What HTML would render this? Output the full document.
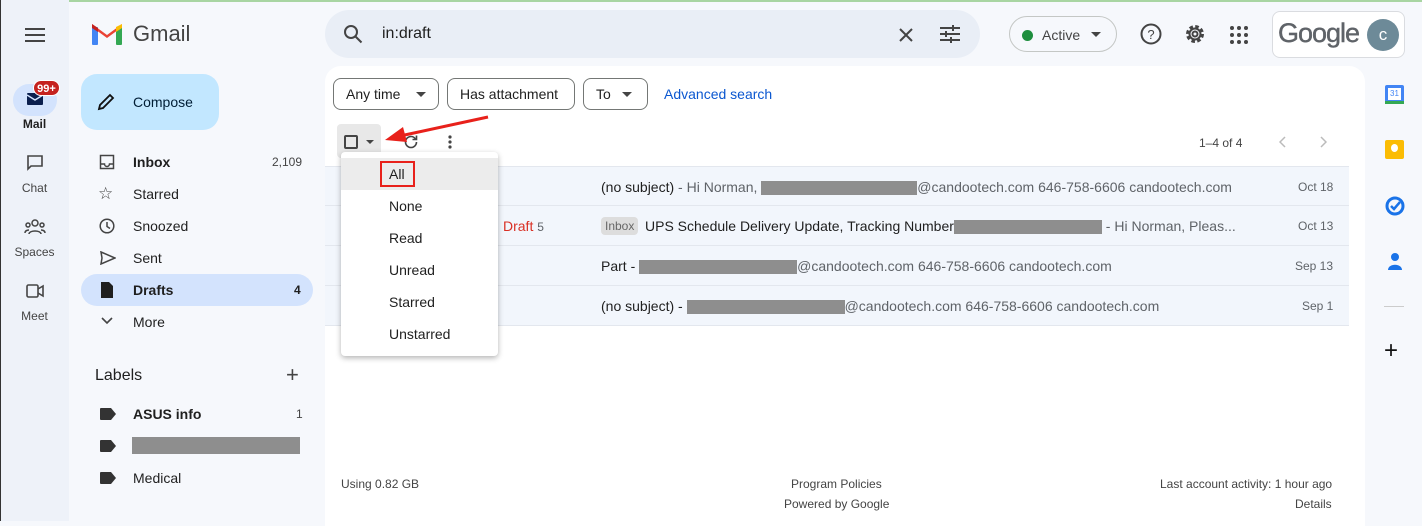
<!DOCTYPE html>
<html><head><meta charset="utf-8"><style>
*{box-sizing:border-box;margin:0;padding:0}
body{width:1422px;height:521px;overflow:hidden;background:#f6f8fc;font-family:"Liberation Sans",Arial,sans-serif;position:relative;color:#1f1f1f}
.a{position:absolute}
.rail{left:0;top:0;width:69px;height:521px;background:#eef2f9;border-left:1px solid #333}
.topline{left:0;top:0;width:1422px;height:2px;background:#a8d5a2}
.nav{font-size:14px;color:#1f1f1f}
.navi{left:81px;width:232px;height:32px;border-radius:16px}
.lab{left:133px}
.row{left:325px;width:1024px;height:40px;background:#f2f6fc;border-bottom:1px solid #e3e7ee;font-size:14px;color:#1f1f1f}
.row span{position:absolute;top:12px}
.g{color:#5f6368}
.red{background:#8e8e8e;height:14px;display:inline-block;vertical-align:middle}
.chip{top:78px;height:32px;border:1px solid #747775;border-radius:8px;font-size:14px;padding:7px 12px;color:#1f1f1f}
.mi{left:389px;font-size:14px;color:#1f1f1f}
.ft{font-size:12px;color:#444}
</style></head><body>
<div class="a topline"></div>
<div class="a rail"></div>
<div class="a" style="left:25px;top:28px;width:20px;height:2px;background:#444;box-shadow:0 6px 0 #444,0 12px 0 #444"></div>
<div class="a" style="left:13px;top:84px;width:44px;height:32px;border-radius:16px;background:#d3e3fd"></div>
<svg class="a" style="left:26px;top:91px" width="18" height="16" viewBox="0 0 18 16"><rect x="1" y="2" width="16" height="12" rx="1" fill="#0b1f4e"/><path d="M1 4l8 5 8-5" stroke="#d3e3fd" stroke-width="1.5" fill="none"/></svg>
<div class="a" style="left:33px;top:80px;width:27px;height:16px;border-radius:8px;background:#c5221f;color:#fff;font-size:11px;font-weight:bold;text-align:center;line-height:16px;border:1px solid #fff">99+</div>
<div class="a" style="left:0;width:69px;text-align:center;top:117px;font-size:12px;font-weight:bold">Mail</div>
<svg class="a" style="left:26px;top:154px" width="18" height="18" viewBox="0 0 18 18"><path d="M2 2h14v10H5l-3 3z" fill="none" stroke="#444" stroke-width="1.6"/></svg>
<div class="a" style="left:0;width:69px;text-align:center;top:181px;font-size:12px;color:#444">Chat</div>
<svg class="a" style="left:24px;top:218px" width="22" height="18" viewBox="0 0 22 18"><circle cx="11" cy="5" r="3" fill="none" stroke="#444" stroke-width="1.5"/><circle cx="4" cy="7" r="2" fill="none" stroke="#444" stroke-width="1.5"/><circle cx="18" cy="7" r="2" fill="none" stroke="#444" stroke-width="1.5"/><path d="M5 16c0-4 12-4 12 0M1 15c0-3 4-3 4-3M21 15c0-3-4-3-4-3" fill="none" stroke="#444" stroke-width="1.5"/></svg>
<div class="a" style="left:0;width:69px;text-align:center;top:245px;font-size:12px;color:#444">Spaces</div>
<svg class="a" style="left:26px;top:284px" width="18" height="14" viewBox="0 0 18 14"><rect x="1" y="1" width="11" height="12" rx="1.5" fill="none" stroke="#444" stroke-width="1.6"/><path d="M12 5l5-3v10l-5-3" fill="none" stroke="#444" stroke-width="1.6"/></svg>
<div class="a" style="left:0;width:69px;text-align:center;top:309px;font-size:12px;color:#444">Meet</div>

<svg class="a" style="left:92px;top:23px" width="30" height="22" viewBox="0 0 30 22"><rect x="0" y="4" width="6" height="18" rx="1" fill="#4285f4"/><rect x="24" y="4" width="6" height="18" rx="1" fill="#34a853"/><path d="M0 4l15 11L30 4V1L15 12 0 1z" fill="#ea4335"/><path d="M24 4l6-3v4l-6 4z" fill="#fbbc04"/><path d="M0 1l6 4v4L0 5z" fill="#c5221f"/></svg>
<div class="a" style="left:133px;top:21px;font-size:22px;color:#444">Gmail</div>

<div class="a" style="left:81px;top:74px;width:138px;height:56px;border-radius:16px;background:#c2e7ff"></div>
<svg class="a" style="left:96px;top:92px" width="20" height="20" viewBox="0 0 20 20"><path d="M3 17l1-4L14 3l3 3L7 16z" fill="none" stroke="#111" stroke-width="1.8"/></svg>
<div class="a" style="left:133px;top:94px;font-size:14px;color:#001d35">Compose</div>

<div class="a navi" style="top:274px;background:#d3e3fd"></div>
<svg class="a" style="left:99px;top:154px" width="16" height="16" viewBox="0 0 16 16"><path d="M1.5 1.5h13v13h-13zM1.5 10h4a2.5 2.5 0 005 0h4" fill="none" stroke="#444" stroke-width="1.5"/></svg>
<div class="a nav lab" style="top:154px;font-weight:bold">Inbox</div><div class="a" style="left:272px;top:155px;font-size:12px;color:#444">2,109</div>
<div class="a" style="left:98px;top:184px;font-size:17px;color:#444">☆</div><div class="a nav lab" style="top:186px">Starred</div>
<svg class="a" style="left:99px;top:218px" width="16" height="16" viewBox="0 0 16 16"><circle cx="8" cy="8" r="6.8" fill="none" stroke="#444" stroke-width="1.5"/><path d="M8 4v4.5l3 2" fill="none" stroke="#444" stroke-width="1.5"/></svg><div class="a nav lab" style="top:218px">Snoozed</div>
<svg class="a" style="left:100px;top:251px" width="16" height="14" viewBox="0 0 16 14"><path d="M1 1l14 6-14 6 1-6z" fill="none" stroke="#444" stroke-width="1.5"/></svg><div class="a nav lab" style="top:250px">Sent</div>
<svg class="a" style="left:101px;top:282px" width="12" height="16" viewBox="0 0 12 16"><path d="M0 0h8l4 4v12H0z" fill="#1f1f1f"/></svg><div class="a nav lab" style="top:282px;font-weight:bold">Drafts</div><div class="a" style="left:294px;top:283px;font-size:12px;font-weight:bold">4</div>
<svg class="a" style="left:101px;top:317px" width="12" height="8" viewBox="0 0 12 8"><path d="M1 1l5 5 5-5" fill="none" stroke="#444" stroke-width="1.6"/></svg><div class="a nav lab" style="top:314px">More</div>
<div class="a" style="left:95px;top:367px;font-size:16px">Labels</div>
<div class="a" style="left:286px;top:362px;font-size:22px;color:#444">+</div>
<svg class="a" style="left:100px;top:408px" width="16" height="12" viewBox="0 0 16 12"><path d="M0 1a1 1 0 011-1h10l5 6-5 6H1a1 1 0 01-1-1z" fill="#333"/></svg><div class="a nav lab" style="top:406px;font-weight:bold">ASUS info</div><div class="a" style="left:296px;top:407px;font-size:12px;color:#444">1</div>
<svg class="a" style="left:100px;top:440px" width="16" height="12" viewBox="0 0 16 12"><path d="M0 1a1 1 0 011-1h10l5 6-5 6H1a1 1 0 01-1-1z" fill="#333"/></svg><div class="a" style="left:132px;top:437px;width:168px;height:17px;background:#8e8e8e"></div>
<svg class="a" style="left:100px;top:472px" width="16" height="12" viewBox="0 0 16 12"><path d="M0 1a1 1 0 011-1h10l5 6-5 6H1a1 1 0 01-1-1z" fill="#333"/></svg><div class="a nav lab" style="top:470px">Medical</div>

<div class="a" style="left:325px;top:10px;width:655px;height:48px;border-radius:24px;background:#e9eef6"></div>
<svg class="a" style="left:343px;top:24px" width="20" height="20" viewBox="0 0 20 20"><circle cx="8" cy="8" r="6" fill="none" stroke="#444" stroke-width="2"/><path d="M12.5 12.5l6 6" stroke="#444" stroke-width="2"/></svg>
<div class="a" style="left:382px;top:25px;font-size:16px">in:draft</div>
<svg class="a" style="left:898px;top:27px" width="16" height="16" viewBox="0 0 16 16"><path d="M2 2l12 12M14 2L2 14" stroke="#444" stroke-width="2"/></svg>
<svg class="a" style="left:940px;top:25px" width="20" height="18" viewBox="0 0 20 18"><path d="M0 3h20M0 9h20M0 15h20" stroke="#444" stroke-width="2"/><rect x="12" y="0" width="2" height="6" fill="#444"/><rect x="5" y="6" width="2" height="6" fill="#444"/><rect x="10" y="12" width="2" height="6" fill="#444"/></svg>

<div class="a" style="left:1009px;top:16px;width:108px;height:36px;border:1px solid #c4c7c5;border-radius:18px"></div>
<div class="a" style="left:1022px;top:30px;width:11px;height:11px;border-radius:50%;background:#1e8e3e"></div>
<div class="a" style="left:1042px;top:27px;font-size:14px;color:#444">Active</div>
<div class="a" style="left:1091px;top:32px;border:5px solid transparent;border-top-color:#444"></div>
<svg class="a" style="left:1140px;top:23px" width="22" height="22" viewBox="0 0 22 22"><circle cx="11" cy="11" r="9.5" fill="none" stroke="#444" stroke-width="2"/><text x="11" y="16" font-size="13" text-anchor="middle" fill="#444" font-family="Liberation Sans">?</text></svg>
<svg class="a" style="left:1184px;top:23px" width="22" height="22" viewBox="0 0 22 22"><circle cx="11" cy="11" r="7" fill="none" stroke="#444" stroke-width="4" stroke-dasharray="3.3 2.2"/><circle cx="11" cy="11" r="5.5" fill="none" stroke="#444" stroke-width="2"/><circle cx="11" cy="11" r="2.5" fill="none" stroke="#444" stroke-width="2"/></svg>
<svg class="a" style="left:1230px;top:26px" width="18" height="18" viewBox="0 0 18 18" fill="#444"><circle cx="2" cy="2" r="2"/><circle cx="9" cy="2" r="2"/><circle cx="16" cy="2" r="2"/><circle cx="2" cy="9" r="2"/><circle cx="9" cy="9" r="2"/><circle cx="16" cy="9" r="2"/><circle cx="2" cy="16" r="2"/><circle cx="9" cy="16" r="2"/><circle cx="16" cy="16" r="2"/></svg>
<div class="a" style="left:1272px;top:11px;width:133px;height:47px;border:1px solid #dadce0;border-radius:8px;background:#fff"></div>
<div class="a" style="left:1278px;top:18px;font-size:27px;color:#5f6368;letter-spacing:-1px;-webkit-text-stroke:0.4px #5f6368">Google</div>
<div class="a" style="left:1367px;top:19px;width:32px;height:32px;border-radius:50%;background:#6d8a98;color:#fff;font-size:17px;text-align:center;line-height:32px">c</div>

<div class="a" style="left:325px;top:66px;width:1040px;height:460px;background:#fff;border-radius:16px 16px 0 0"></div>
<div class="a chip" style="left:333px;width:106px">Any time</div><div class="a" style="left:416px;top:92px;border:5px solid transparent;border-top-color:#444"></div>
<div class="a chip" style="left:447px;width:128px">Has attachment</div>
<div class="a chip" style="left:583px;width:65px">To</div><div class="a" style="left:622px;top:92px;border:5px solid transparent;border-top-color:#444"></div>
<div class="a" style="left:664px;top:86px;font-size:14px;color:#0b57d0">Advanced search</div>

<div class="a" style="left:337px;top:124px;width:44px;height:34px;background:#e8e8e8;border-radius:4px"></div>
<div class="a" style="left:344px;top:135px;width:14px;height:14px;border:2px solid #444;border-radius:2px"></div>
<div class="a" style="left:366px;top:140px;border:4px solid transparent;border-top-color:#444"></div>
<svg class="a" style="left:403px;top:134px" width="16" height="16" viewBox="0 0 16 16"><path d="M13.5 8A5.5 5.5 0 118 2.5c2 0 3.5 1 4.5 2.5" fill="none" stroke="#444" stroke-width="1.6"/><path d="M13.5 1.5v4h-4" fill="none" stroke="#444" stroke-width="1.6"/></svg>
<svg class="a" style="left:448px;top:135px" width="4" height="14" viewBox="0 0 4 14" fill="#444"><circle cx="2" cy="2" r="1.6"/><circle cx="2" cy="7" r="1.6"/><circle cx="2" cy="12" r="1.6"/></svg>
<svg class="a" style="left:380px;top:112px" width="112" height="34" viewBox="0 0 112 34"><path d="M108 5L20 24" stroke="#e8211b" stroke-width="3"/><path d="M5 28l18-13 4 15z" fill="#e8211b"/></svg>
<div class="a" style="left:1199px;top:136px;font-size:12px;color:#444">1–4 of 4</div>
<svg class="a" style="left:1279px;top:136px" width="8" height="12" viewBox="0 0 8 12"><path d="M6 1L1 6l5 5" fill="none" stroke="#bbb" stroke-width="1.5"/></svg>
<svg class="a" style="left:1319px;top:136px" width="8" height="12" viewBox="0 0 8 12"><path d="M2 1l5 5-5 5" fill="none" stroke="#bbb" stroke-width="1.5"/></svg>

<div class="a row" style="top:166px;border-top:1px solid #e3e7ee"><span style="left:276px">(no subject) <span class="g" style="position:static">- Hi Norman, <i class="red" style="width:156px"></i>@candootech.com 646-758-6606 candootech.com</span></span><span class="g" style="left:973px;font-size:12px;top:13px">Oct 18</span></div>
<div class="a row" style="top:206px"><span style="left:178px;color:#d93025">Draft <span class="g" style="position:static;font-size:12px">5</span></span><span style="left:276px;top:11px;background:#ddd;color:#666;font-size:12px;padding:2px 4px;border-radius:4px">Inbox</span><span style="left:320px">UPS Schedule Delivery Update, Tracking Number<i class="red" style="width:148px"></i><span class="g" style="position:static"> - Hi Norman, Pleas...</span></span><span class="g" style="left:973px;font-size:12px;top:13px">Oct 13</span></div>
<div class="a row" style="top:246px"><span style="left:276px">Part - <i class="red" style="width:158px"></i><span class="g" style="position:static">@candootech.com 646-758-6606 candootech.com</span></span><span class="g" style="left:970px;font-size:12px;top:13px">Sep 13</span></div>
<div class="a row" style="top:286px"><span style="left:276px">(no subject) - <i class="red" style="width:158px"></i><span class="g" style="position:static">@candootech.com 646-758-6606 candootech.com</span></span><span class="g" style="left:977px;font-size:12px;top:13px">Sep 1</span></div>

<div class="a" style="left:341px;top:152px;width:157px;height:204px;background:#fff;border-radius:4px;box-shadow:0 2px 6px rgba(0,0,0,.3)"></div>
<div class="a" style="left:341px;top:158px;width:157px;height:32px;background:#ececec"></div>
<div class="a" style="left:380px;top:161px;width:35px;height:26px;border:2px solid #e8211b"></div>
<div class="a mi" style="top:166px">All</div>
<div class="a mi" style="top:198px">None</div>
<div class="a mi" style="top:230px">Read</div>
<div class="a mi" style="top:262px">Unread</div>
<div class="a mi" style="top:294px">Starred</div>
<div class="a mi" style="top:326px">Unstarred</div>

<div class="a ft" style="left:341px;top:477px">Using 0.82 GB</div>
<div class="a ft" style="left:791px;top:477px">Program Policies</div>
<div class="a ft" style="left:784px;top:497px">Powered by Google</div>
<div class="a ft" style="left:1160px;top:477px">Last account activity: 1 hour ago</div>
<div class="a ft" style="left:1295px;top:497px">Details</div>

<div class="a" style="left:1385px;top:85px;width:19px;height:18px;border-radius:2px;background:#4285f4"></div>
<div class="a" style="left:1388px;top:88px;width:13px;height:12px;background:#fff;font-size:8px;color:#4285f4;text-align:center;line-height:12px">31</div>
<div class="a" style="left:1385px;top:101px;width:19px;height:3px;background:#34a853"></div>
<div class="a" style="left:1385px;top:140px;width:19px;height:19px;border-radius:2px;background:#fbbc04"></div>
<div class="a" style="left:1391px;top:144px;width:7px;height:8px;border-radius:50%;background:#fff"></div>
<svg class="a" style="left:1385px;top:196px" width="20" height="20" viewBox="0 0 20 20"><circle cx="10" cy="10" r="8" fill="none" stroke="#1a73e8" stroke-width="3"/><path d="M6 10l3 3 6-7" fill="none" stroke="#1a73e8" stroke-width="2.5"/></svg>
<svg class="a" style="left:1388px;top:252px" width="14" height="18" viewBox="0 0 14 18"><circle cx="7" cy="5" r="4" fill="#1a73e8"/><path d="M0 18c0-7 14-7 14 0z" fill="#1a73e8"/></svg>
<div class="a" style="left:1384px;top:306px;width:20px;height:1px;background:#ccc"></div>
<div class="a" style="left:1384px;top:337px;font-size:24px;color:#111">+</div>
</body></html>
